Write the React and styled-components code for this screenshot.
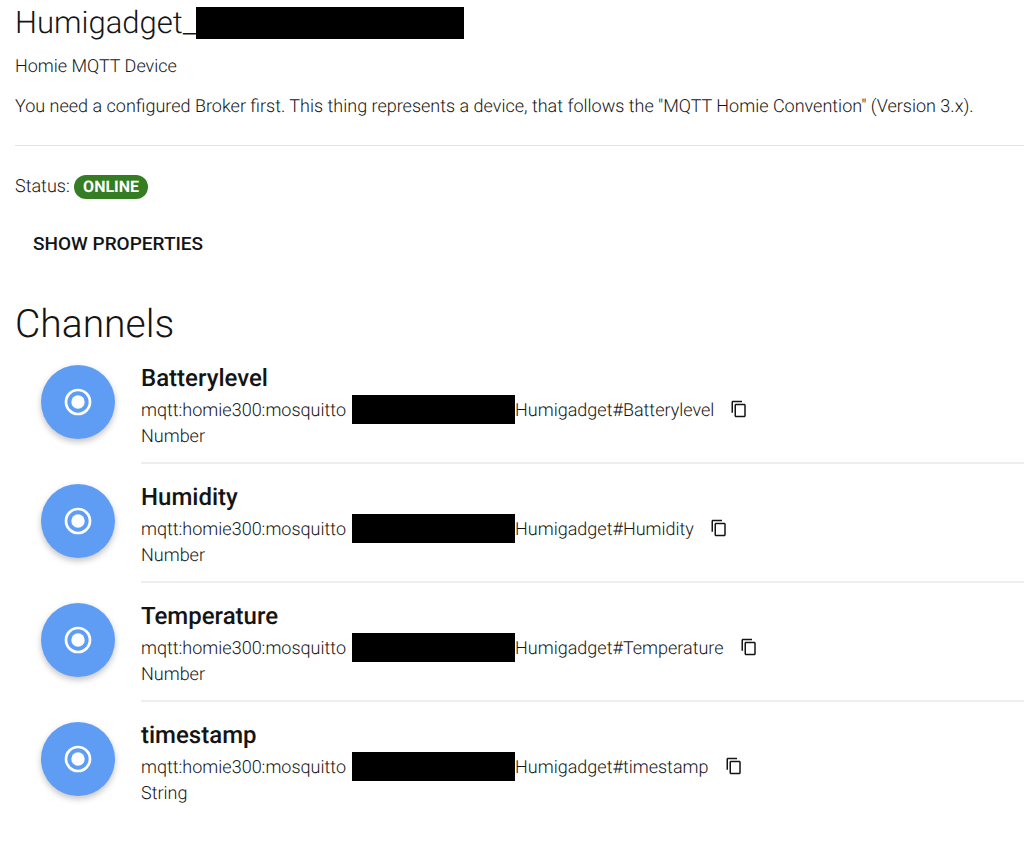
import React from "react";
import styled, { createGlobalStyle } from "styled-components";

const GlobalStyle = createGlobalStyle`
    * {
        box-sizing: border-box;
    }

    body {
        margin: 0;
        background: #fff;
        color: #141414;
        font-family: Roboto, "Liberation Sans", sans-serif;
        font-size: 18px;
        font-weight: 300;
        line-height: 26px;
        text-rendering: geometricPrecision;
    }
`;

const Page = styled.main({
    padding: '0 0 32px 15px'
});

const Title = styled.h1({
    display: 'flex',
    alignItems: 'center',
    margin: '0 0 10px',
    paddingTop: '2px',
    fontSize: '31px',
    fontWeight: '300',
    lineHeight: '42px'
});

const Text = styled.p({
    margin: '0 0 14px'
});

const Divider = styled.hr({
    margin: '25px 0 28px',
    border: 0,
    borderTop: '1px solid #e3e3e3'
});

const Badge = styled.span({
    display: 'inline-block',
    padding: '0 9px',
    borderRadius: '12px',
    background: '#347d22',
    color: '#fff',
    fontSize: '16px',
    fontWeight: '700',
    lineHeight: '24px'
});

const PropertiesButton = styled.button({
    margin: '20px 0 0',
    padding: '0 18px',
    height: '48px',
    border: 0,
    background: 'transparent',
    color: 'inherit',
    font: 'inherit',
    fontSize: '19px',
    fontWeight: '500',
    textTransform: 'uppercase',
    cursor: 'pointer'
});

const SectionTitle = styled.h2({
    margin: '32px 0 17px',
    fontSize: '39px',
    fontWeight: '300',
    lineHeight: '48px'
});

const Redacted = styled.span`
    flex: none;
    width: ${({ $large }) => $large ? '268px' : '163px'};
    height: ${({ $large }) => $large ? '32px' : '29px'};
    margin: ${({ $large }) => $large ? '0' : '0 0 4px 6px'};
    background: #000;
`;

const ChannelList = styled.ul({
    margin: 0,
    padding: '0 0 0 26px',
    listStyle: 'none'
});

const ChannelRow = styled.li({
    display: 'flex',
    gap: '26px',
    marginBottom: '20px'
});

const ChannelCircle = styled.span({
    display: 'grid',
    placeItems: 'center',
    flex: 'none',
    width: '74px',
    height: '74px',
    borderRadius: '50%',
    background: '#5f9df4',
    boxShadow: '0 3px 6px rgba(0, 0, 0, 0.24)'
});

const ChannelBody = styled.div`
    flex: 1;
    padding-bottom: 12px;
    border-bottom: 2px solid ${({ $last }) => $last ? 'transparent' : '#eee'};
`;

const ChannelName = styled.h3({
    margin: '0 0 7px',
    fontSize: '24px',
    fontWeight: '500',
    lineHeight: '26px'
});

const ChannelUid = styled.div({
    display: 'flex',
    alignItems: 'center',
    height: '26px'
});

const CopyButton = styled.button({
    display: 'flex',
    marginLeft: '16px',
    padding: '0 0 4px',
    border: 0,
    background: 'transparent',
    color: 'inherit',
    cursor: 'pointer'
});

const channels = [
    { name: 'Batterylevel', type: 'Number' },
    { name: 'Humidity', type: 'Number' },
    { name: 'Temperature', type: 'Number' },
    { name: 'timestamp', type: 'String' }
];

const RadioIcon = () => (
    <svg width="32" height="32" viewBox="0 0 32 32" aria-hidden="true">
        <circle cx="16" cy="16" r="12" fill="none" stroke="#fff" strokeWidth="2.700" />
        <circle cx="16" cy="16" r="6.700" fill="#fff" />
    </svg>
);

const CopyIcon = () => (
    <svg width="18" height="18" viewBox="0 0 24 24" fill="currentColor" aria-hidden="true">
        <path d="M16 1H4c-1.100 0-2 .900-2 2v14h2V3h12V1zm3 4H8c-1.100 0-2 .900-2 2v14c0 1.100.900 2 2 2h11c1.100 0 2-.900 2-2V7c0-1.100-.900-2-2-2zm0 16H8V7h11v14z" />
    </svg>
);

const Channel = ({ channel, last }) => (
    <ChannelRow>
        <ChannelCircle>
            <RadioIcon />
        </ChannelCircle>
        <ChannelBody $last={last}>
            <ChannelName>{channel.name}</ChannelName>
            <ChannelUid>
                mqtt:homie300:mosquitto
                <Redacted />
                Humigadget#{channel.name}
                <CopyButton type="button" aria-label={`Copy ${channel.name} channel`}>
                    <CopyIcon />
                </CopyButton>
            </ChannelUid>
            <div>{channel.type}</div>
        </ChannelBody>
    </ChannelRow>
);

const App = () => {
    return (
        <>
            <GlobalStyle />
            <Page>
                <Title>Humigadget_<Redacted $large /></Title>
                <Text>Homie MQTT Device</Text>
                <Text>You need a configured Broker first. This thing represents a device, that follows the "MQTT Homie Convention" (Version 3.x).</Text>
                <Divider />
                <div>Status: <Badge>ONLINE</Badge></div>
                <PropertiesButton type="button">Show Properties</PropertiesButton>
                <SectionTitle>Channels</SectionTitle>
                <ChannelList>
                    {channels.map((channel, i) => (
                        <Channel key={channel.name} channel={channel} last={i === channels.length - 1} />
                    ))}
                </ChannelList>
            </Page>
        </>
    )
}

export default App
